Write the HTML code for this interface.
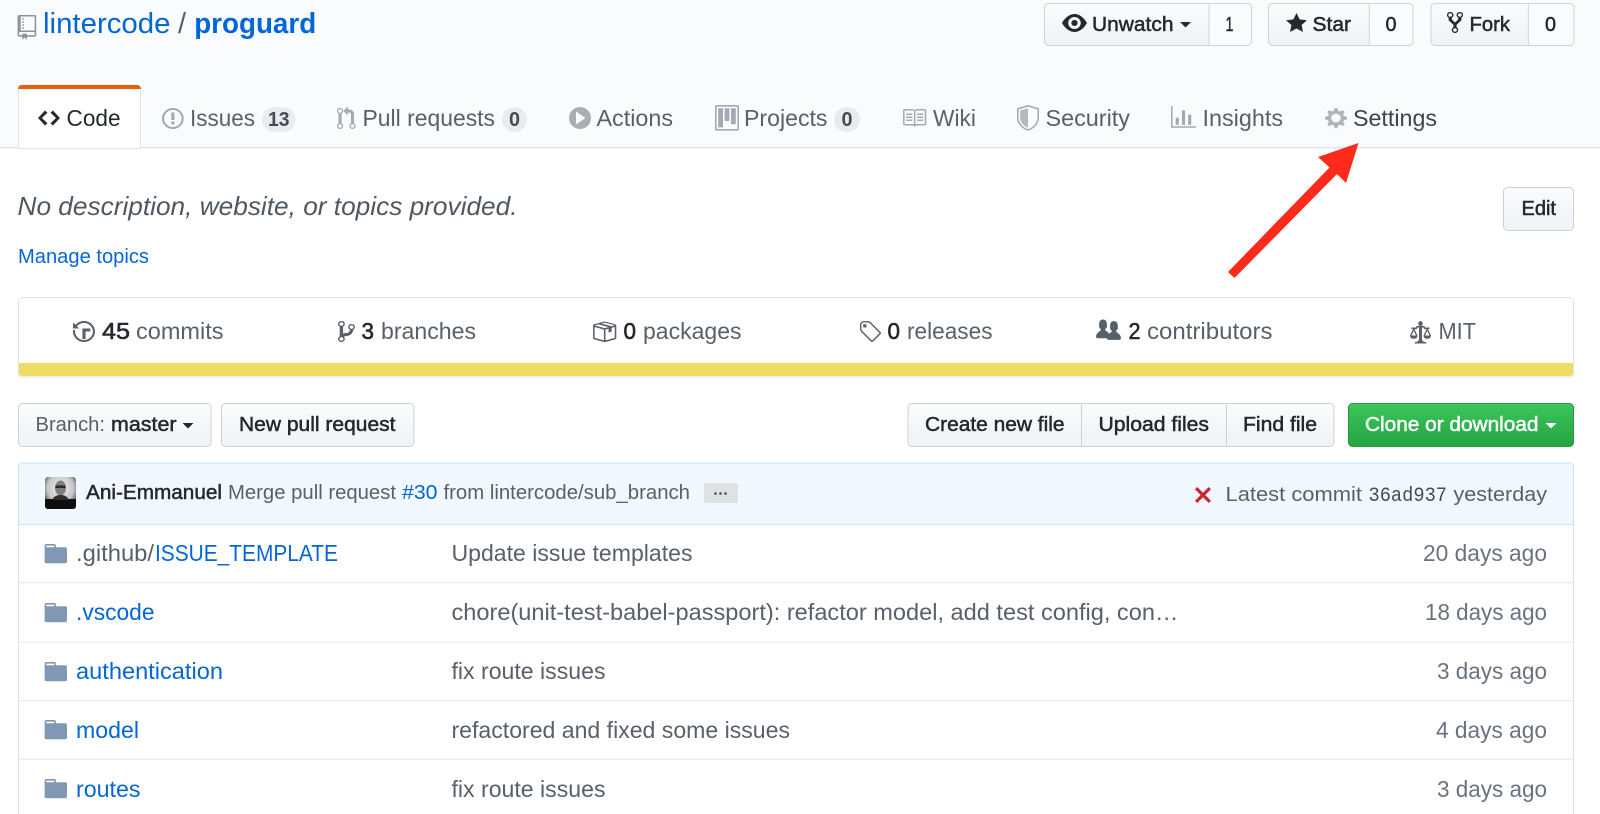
<!DOCTYPE html>
<html lang="en">
<head>
<meta charset="utf-8">
<title>lintercode / proguard</title>
<style>
html,body{margin:0;padding:0;background:#fff;width:1600px;height:814px;overflow:hidden}
svg{display:block;filter:blur(.35px)}
text{font-family:"Liberation Sans",Arial,sans-serif;white-space:pre}
.tab{font-size:23px;fill:#586069}
.cur{font-size:23px;fill:#24292e}
.cnt{font-size:20px;font-weight:700;fill:#444d56}
.btn{font-size:20.5px;fill:#24292e;stroke:#24292e;stroke-width:.5px}
.st{font-size:23px;fill:#586069}
.num{font-size:23px;fill:#24292e;stroke:#24292e;stroke-width:.6px}
.msg{font-size:23px;fill:#586069}
.lnk{font-size:23px;fill:#0366d6}
.tm{font-size:23px;fill:#6a737d}
.cm{font-size:20.5px;fill:#586069}
.ic{fill:#a3aab1}
.ic2{fill:#586069}
</style>
</head>
<body>
<svg width="1600" height="814" viewBox="0 0 1600 814" xmlns="http://www.w3.org/2000/svg">
<defs>
<linearGradient id="g" x1="0" y1="0" x2="0" y2="1"><stop offset="0" stop-color="#fafbfc"/><stop offset="1" stop-color="#eff3f6"/></linearGradient>
<linearGradient id="gg" x1="0" y1="0" x2="0" y2="1"><stop offset="0" stop-color="#3ac75a"/><stop offset="1" stop-color="#27a243"/></linearGradient>
<radialGradient id="av" cx=".5" cy=".35" r=".65"><stop offset="0" stop-color="#f4f4f4"/><stop offset=".65" stop-color="#c6c6c6"/><stop offset="1" stop-color="#444"/></radialGradient>
<path id="fd" fill="#8098b3" fill-rule="evenodd" d="M13 4H7V3c0-.66-.31-1-1-1H1c-.55 0-1 .45-1 1v10c0 .55.45 1 1 1h12c.55 0 1-.45 1-1V5c0-.55-.45-1-1-1zM6 4H1V3h5v1z"/>
</defs>

<!-- header background -->
<rect x="0" y="0" width="1600" height="147" fill="#fafbfc"/>
<rect x="0" y="147" width="1600" height="1.4" fill="#e1e4e8"/>

<!-- repo title -->
<g transform="translate(17.6,15) scale(1.55)"><path fill="#8b949c" fill-rule="evenodd" d="M4 9H3V8h1v1zm0-3H3v1h1V6zm0-2H3v1h1V4zm0-2H3v1h1V2zm8-1v12c0 .55-.45 1-1 1H6v2l-1.5-1.5L3 16v-2H1c-.55 0-1-.45-1-1V1c0-.55.45-1 1-1h10c.55 0 1 .45 1 1zm-1 10H1v2h2v-1h3v1h5v-2zm0-10H2v9h9V1z"/></g>
<text x="43" y="33" font-size="29" fill="#0366d6" textLength="127.500" lengthAdjust="spacingAndGlyphs">lintercode</text>
<text x="178" y="33" font-size="29" fill="#586069">/</text>
<text x="194.200" y="33" font-size="29" font-weight="700" fill="#0366d6" textLength="122" lengthAdjust="spacingAndGlyphs">proguard</text>

<!-- top-right buttons -->
<path d="M1048.500 4h160.500v41h-160.500a4 4 0 0 1-4-4v-33a4 4 0 0 1 4-4z" fill="url(#g)"/>
<rect x="1044.500" y="3.500" width="207" height="42" rx="4" fill="none" stroke="#cfd2d5"/>
<rect x="1208.500" y="4" width="1" height="41" fill="#cfd2d5"/>
<g transform="translate(1062,11) scale(1.56,1.5)"><path fill="#24292e" fill-rule="evenodd" d="M8.06 2C3 2 0 8 0 8s3 6 8.06 6C13 14 16 8 16 8s-3-6-7.94-6zM8 12c-2.200 0-4-1.780-4-4 0-2.200 1.800-4 4-4 2.220 0 4 1.800 4 4 0 2.220-1.780 4-4 4zm2-4c0 1.110-.89 2-2 2-1.110 0-2-.89-2-2 0-1.110.89-2 2-2 1.110 0 2 .89 2 2z"/></g>
<text class="btn" x="1092" y="31" textLength="81.500" lengthAdjust="spacingAndGlyphs">Unwatch</text>
<path d="M1180 22h11l-5.500 5.500z" fill="#24292e"/>
<text class="btn" x="1225.500" y="31" textLength="8" lengthAdjust="spacingAndGlyphs">1</text>

<path d="M1272.500 4h96.500v41h-96.500a4 4 0 0 1-4-4v-33a4 4 0 0 1 4-4z" fill="url(#g)"/>
<rect x="1268.500" y="3.500" width="144.500" height="42" rx="4" fill="none" stroke="#cfd2d5"/>
<rect x="1368.800" y="4" width="1" height="41" fill="#cfd2d5"/>
<g transform="translate(1286,11.500) scale(1.5,1.46)"><path fill="#24292e" d="M14 6l-4.900-.64L7 1 4.900 5.360 0 6l3.600 3.260L2.670 14 7 11.670 11.330 14l-.93-4.740L14 6z"/></g>
<text class="btn" x="1312.500" y="31" textLength="38.500" lengthAdjust="spacingAndGlyphs">Star</text>
<text class="btn" x="1385.500" y="31" textLength="11" lengthAdjust="spacingAndGlyphs">0</text>

<path d="M1435 4h93v41h-93a4 4 0 0 1-4-4v-33a4 4 0 0 1 4-4z" fill="url(#g)"/>
<rect x="1431" y="3.500" width="143" height="42" rx="4" fill="none" stroke="#cfd2d5"/>
<rect x="1527.800" y="4" width="1" height="41" fill="#cfd2d5"/>
<g transform="translate(1447,10.500) scale(1.6,1.5)"><path fill="#24292e" fill-rule="evenodd" d="M8 1a1.993 1.993 0 0 0-1 3.720V6L5 8 3 6V4.720A1.993 1.993 0 0 0 2 1a1.993 1.993 0 0 0-1 3.720V6.500l3 3v1.780A1.993 1.993 0 0 0 5 15a1.993 1.993 0 0 0 1-3.720V9.500l3-3V4.720A1.993 1.993 0 0 0 8 1zM2 4.200C1.340 4.200.8 3.650.8 3c0-.65.55-1.200 1.200-1.200.65 0 1.200.55 1.200 1.200 0 .65-.55 1.200-1.200 1.200zm3 10c-.66 0-1.200-.55-1.200-1.200 0-.65.55-1.200 1.200-1.200.65 0 1.200.55 1.200 1.200 0 .65-.55 1.200-1.200 1.200zm3-10c-.66 0-1.200-.55-1.200-1.200 0-.65.55-1.200 1.200-1.200.65 0 1.200.55 1.200 1.200 0 .65-.55 1.200-1.200 1.200z"/></g>
<text class="btn" x="1469.500" y="31" textLength="40.500" lengthAdjust="spacingAndGlyphs">Fork</text>
<text class="btn" x="1545" y="31" textLength="11" lengthAdjust="spacingAndGlyphs">0</text>

<!-- tabs -->
<path d="M18.500 148.500V89a4 4 0 0 1 4-4h114a4 4 0 0 1 4 4v59.500z" fill="#fff" stroke="#e1e4e8"/>
<path d="M18 89a4 4 0 0 1 4-4h115a4 4 0 0 1 4 4z" fill="#e36209"/>
<g transform="translate(38,106) scale(1.57,1.5)"><path fill="#24292e" d="M9.500 3L8 4.500 11.500 8 8 11.500 9.500 13 14 8 9.500 3zm-5 0L0 8l4.500 5L6 11.500 2.500 8 6 4.500 4.500 3z"/></g>
<text class="cur" x="66.500" y="126" textLength="54" lengthAdjust="spacingAndGlyphs">Code</text>

<g transform="translate(162,106.500) scale(1.55,1.5)"><path class="ic" fill-rule="evenodd" d="M7 2.300c3.140 0 5.700 2.560 5.700 5.700s-2.560 5.700-5.700 5.700A5.710 5.710 0 0 1 1.300 8c0-3.140 2.560-5.700 5.700-5.700zM7 1C3.140 1 0 4.140 0 8s3.140 7 7 7 7-3.140 7-7-3.140-7-7-7zm1 3H6v5h2V4zm0 6H6v2h2v-2z"/></g>
<text class="tab" x="190" y="126" textLength="65" lengthAdjust="spacingAndGlyphs">Issues</text>
<rect x="262" y="107" width="33.500" height="25" rx="12.500" fill="#e9ebee"/>
<text class="cnt" x="268" y="126" textLength="21.500" lengthAdjust="spacingAndGlyphs">13</text>

<g transform="translate(337,106.500) scale(1.55,1.5)"><path class="ic" fill-rule="evenodd" d="M11 11.280V5c-.03-.78-.34-1.470-.94-2.060C9.460 2.350 8.780 2.030 8 2H7V0L4 3l3 3V4h1c.27.02.48.11.69.31.21.2.3.42.31.69v6.280A1.993 1.993 0 0 0 10 15a1.993 1.993 0 0 0 1-3.720zm-1 2.920c-.66 0-1.200-.55-1.200-1.200 0-.65.55-1.200 1.200-1.200.65 0 1.200.55 1.200 1.200 0 .65-.55 1.200-1.200 1.200zM4 3c0-1.110-.89-2-2-2a1.993 1.993 0 0 0-1 3.720v6.560A1.993 1.993 0 0 0 2 15a1.993 1.993 0 0 0 1-3.720V4.720c.59-.34 1-.98 1-1.720zm-.8 10c0 .66-.55 1.200-1.200 1.200-.65 0-1.200-.55-1.200-1.200 0-.65.55-1.200 1.200-1.200.65 0 1.200.55 1.200 1.200zM2 4.200C1.340 4.200.8 3.650.8 3c0-.65.55-1.200 1.200-1.200.65 0 1.200.55 1.200 1.200 0 .65-.55 1.200-1.200 1.200z"/></g>
<text class="tab" x="362.500" y="126" textLength="132.500" lengthAdjust="spacingAndGlyphs">Pull requests</text>
<rect x="502" y="107" width="25" height="25" rx="12.500" fill="#e9ebee"/>
<text class="cnt" x="509" y="126" textLength="11" lengthAdjust="spacingAndGlyphs">0</text>

<circle cx="580" cy="118" r="11" fill="#a9aeb3"/>
<path d="M576 111.500l9.500 6.500-9.500 6.500z" fill="#fafbfc"/>
<text class="tab" x="596.500" y="126" textLength="76.500" lengthAdjust="spacingAndGlyphs">Actions</text>

<g transform="translate(715,105) scale(1.6)"><path class="ic" fill-rule="evenodd" d="M10 12h3V2h-3v10zm-4-2h3V2H6v8zm-4 4h3V2H2v12zm-1 1h13V1H1v14zM14 0H1a1 1 0 0 0-1 1v14a1 1 0 0 0 1 1h13a1 1 0 0 0 1-1V1a1 1 0 0 0-1-1z"/></g>
<text class="tab" x="744" y="126" textLength="83.500" lengthAdjust="spacingAndGlyphs">Projects</text>
<rect x="834" y="107" width="26" height="25" rx="12.500" fill="#e9ebee"/>
<text class="cnt" x="841.500" y="126" textLength="11" lengthAdjust="spacingAndGlyphs">0</text>

<g transform="translate(901.500,106) scale(1.55,1.5)"><path class="ic" fill-rule="evenodd" d="M3 5h4v1H3V5zm0 3h4V7H3v1zm0 2h4V9H3v1zm11-5h-4v1h4V5zm0 2h-4v1h4V7zm0 2h-4v1h4V9zm2-6v9c0 .55-.45 1-1 1H9.500l-1 1-1-1H2c-.55 0-1-.45-1-1V3c0-.55.45-1 1-1h5.500l1 1 1-1H15c.55 0 1 .45 1 1zm-8 .5L7.500 3H2v9h6V3.500zm7-.5H9.500l-.5.5V12h6V3z"/></g>
<text class="tab" x="933" y="126" textLength="43" lengthAdjust="spacingAndGlyphs">Wiki</text>

<g transform="translate(1017,105) scale(1.57,1.6)"><path class="ic" fill-rule="evenodd" d="M7 0L0 2v6.020C0 12.690 5.310 16 7 16c1.690 0 7-3.310 7-7.980V2L7 0zM7 1L1 2.800V8c0 4 4.500 7 6 7s6-3 6-7V2.800z"/><path fill="#b4b9be" d="M7 2L2 3.400V8c0 3.500 3.500 6 5 6z"/></g>
<text class="tab" x="1045.500" y="126" textLength="84.500" lengthAdjust="spacingAndGlyphs">Security</text>

<g transform="translate(1171,106) scale(1.56,1.45)"><path class="ic" d="M16 14v1H0V0h1v14h15zM5 13H3V8h2v5zm4 0H7V3h2v10zm4 0h-2V6h2v7z"/></g>
<text class="tab" x="1202.500" y="126" textLength="80.500" lengthAdjust="spacingAndGlyphs">Insights</text>

<g transform="translate(1325,106.500) scale(1.57,1.45)"><path fill="#b0b5ba" fill-rule="evenodd" d="M14 8.770v-1.600l-1.940-.64-.45-1.090.88-1.840-1.130-1.130-1.810.91-1.090-.45-.69-1.920h-1.600l-.63 1.940-1.110.45-1.840-.88-1.130 1.130.91 1.810-.45 1.090L0 7.230v1.590l1.940.64.45 1.090-.88 1.840 1.130 1.130 1.810-.91 1.090.45.69 1.920h1.590l.63-1.940 1.110-.45 1.840.88 1.130-1.130-.92-1.810.47-1.090L14 8.750v.02zM7 11c-1.660 0-3-1.340-3-3s1.340-3 3-3 3 1.340 3 3-1.340 3-3 3z"/></g>
<text class="cur" x="1353" y="126" textLength="84" lengthAdjust="spacingAndGlyphs" style="fill:#3c444c">Settings</text>

<!-- description -->
<text x="17.500" y="215" font-size="26" font-style="italic" fill="#4f5860" textLength="500" lengthAdjust="spacingAndGlyphs">No description, website, or topics provided.</text>
<text class="lnk" x="18" y="263" style="font-size:20.5px" textLength="131" lengthAdjust="spacingAndGlyphs">Manage topics</text>

<rect x="1503.500" y="187.500" width="70" height="43" rx="4" fill="url(#g)" stroke="#cfd2d5"/>
<text class="btn" x="1521.500" y="215" textLength="34.500" lengthAdjust="spacingAndGlyphs">Edit</text>

<!-- stats box -->
<rect x="18.500" y="297.500" width="1555" height="79.500" rx="4" fill="#fff" stroke="#dfe2e5"/>
<path d="M19 363h1554v10a3 3 0 0 1-3 3H22a3 3 0 0 1-3-3z" fill="#f1dc62"/>

<g transform="translate(73,319.500) scale(1.57,1.5)"><path class="ic2" fill-rule="evenodd" d="M8 13H6V6h5v2H8v5zM7 1C4.810 1 2.870 2.020 1.590 3.590L0 2v4h4L2.500 4.500C3.550 3.170 5.170 2.300 7 2.300c3.140 0 5.700 2.560 5.700 5.700s-2.560 5.700-5.700 5.700A5.710 5.710 0 0 1 1.300 8c0-.34.03-.67.09-1H.08C.03 7.330 0 7.660 0 8c0 3.860 3.140 7 7 7s7-3.140 7-7-3.140-7-7-7z"/></g>
<text class="num" x="102" y="339" textLength="28" lengthAdjust="spacingAndGlyphs">45</text>
<text class="st" x="136" y="339" textLength="87.500" lengthAdjust="spacingAndGlyphs">commits</text>

<g transform="translate(338,319.500) scale(1.7,1.5)"><path class="ic2" fill-rule="evenodd" d="M10 5c0-1.110-.89-2-2-2a1.993 1.993 0 0 0-1 3.720v.3c-.02.52-.23.98-.63 1.380-.4.4-.86.61-1.380.63-.83.02-1.480.16-2 .45V4.720a1.993 1.993 0 0 0-1-3.720C.88 1 0 1.890 0 3a2 2 0 0 0 1 1.720v6.560c-.59.35-1 .99-1 1.720 0 1.110.89 2 2 2 1.110 0 2-.89 2-2 0-.53-.2-1-.53-1.360.09-.06.48-.41.59-.47.25-.11.56-.17.94-.17 1.050-.05 1.950-.45 2.750-1.250S8.950 7.770 9 6.730h-.02C9.590 6.370 10 5.730 10 5zM2 1.800c.66 0 1.200.55 1.200 1.200 0 .65-.55 1.200-1.200 1.200C1.350 4.200.8 3.650.8 3c0-.65.55-1.200 1.200-1.200zm0 12.410c-.66 0-1.200-.55-1.200-1.200 0-.65.55-1.200 1.200-1.200.65 0 1.200.55 1.200 1.200 0 .65-.55 1.200-1.200 1.200zm6-8c-.66 0-1.200-.55-1.200-1.200 0-.65.55-1.200 1.200-1.200.65 0 1.200.55 1.200 1.200 0 .65-.55 1.200-1.200 1.200z"/></g>
<text class="num" x="361.500" y="339" textLength="12.500" lengthAdjust="spacingAndGlyphs">3</text>
<text class="st" x="381" y="339" textLength="95" lengthAdjust="spacingAndGlyphs">branches</text>

<g transform="translate(591.500,319) scale(1.55,1.6)"><path class="ic2" fill-rule="evenodd" d="M1 4.270v7.470c0 .45.3.84.75.97l6.500 1.730c.16.05.34.05.5 0l6.500-1.730c.45-.13.75-.52.75-.97V4.270c0-.45-.3-.84-.75-.97l-6.500-1.740a1.400 1.400 0 0 0-.5 0L1.750 3.300c-.45.13-.75.52-.75.97zm7 9.090l-6-1.590V5l6 1.610v6.750zM2 4l2.500-.67L11 5.060l-2.500.67L2 4zm13 7.770l-6 1.590V6.610l2-.55V8.500l2-.53V5.530L15 5v6.770zm-2-7.240L6.500 2.800l2-.53L15 4l-2 .53z"/></g>
<text class="num" x="623.500" y="339" textLength="12.500" lengthAdjust="spacingAndGlyphs">0</text>
<text class="st" x="643" y="339" textLength="98.500" lengthAdjust="spacingAndGlyphs">packages</text>

<g transform="translate(858.400,319.500) scale(1.6)"><path class="ic2" fill-rule="evenodd" d="M7.730 1.730C7.260 1.260 6.620 1 5.960 1H3.500C2.130 1 1 2.130 1 3.500v2.470c0 .66.27 1.300.73 1.770l6.060 6.060c.39.39 1.020.39 1.410 0l4.590-4.590a.996.996 0 0 0 0-1.410L7.730 1.730zM2.380 7.090c-.31-.3-.47-.7-.47-1.130V3.500c0-.88.72-1.590 1.590-1.590h2.470c.42 0 .83.16 1.130.47l6.140 6.130-4.730 4.730-6.130-6.150zM3.010 3h2v2H3V3h.01z"/></g>
<text class="num" x="887.500" y="339" textLength="12.500" lengthAdjust="spacingAndGlyphs">0</text>
<text class="st" x="907" y="339" textLength="85.500" lengthAdjust="spacingAndGlyphs">releases</text>

<g transform="translate(1096,318) scale(1.56)"><path class="ic2" d="M16 12.999c0 .439-.45 1-1 1H7.995c-.539 0-.994-.447-.995-.999H1c-.54 0-1-.561-1-1 0-2.634 3-4 3-4s.229-.409 0-1c-.841-.621-1.058-.59-1-3 .058-2.419 1.367-3 2.500-3s2.442.58 2.500 3c.058 2.410-.159 2.379-1 3-.229.59 0 1 0 1s1.549.711 2.420 2.088C9.196 9.369 10 8.999 10 8.999s.229-.409 0-1c-.841-.62-1.058-.59-1-3 .058-2.419 1.367-3 2.500-3s2.437.581 2.495 3c.059 2.410-.158 2.380-1 3-.229.59 0 1 0 1s3.005 1.366 3.005 4z"/></g>
<text class="num" x="1128.500" y="339" textLength="12" lengthAdjust="spacingAndGlyphs">2</text>
<text class="st" x="1147" y="339" textLength="125.500" lengthAdjust="spacingAndGlyphs">contributors</text>

<g transform="translate(1410,319.500) scale(1.5,1.6)"><path class="ic2" fill-rule="evenodd" d="M7 4c-.83 0-1.500-.67-1.500-1.500S6.170 1 7 1s1.500.67 1.500 1.500S7.830 4 7 4zm7 6c0 1.110-.89 2-2 2h-1c-1.110 0-2-.89-2-2l2-4h-1c-.55 0-1-.45-1-1H8v8c.42 0 1 .45 1 1h1c.42 0 1 .45 1 1H3c0-.55.58-1 1-1h1c0-.55.58-1 1-1h.03L6 5H5c0 .55-.45 1-1 1H3l2 4c0 1.110-.89 2-2 2H2c-1.110 0-2-.89-2-2l2-4H1V5h3c0-.55.45-1 1-1h4c.55 0 1 .45 1 1h3v1h-1l2 4zM2.500 7L1 10h3L2.500 7zM13 10l-1.500-3-1.500 3h3z"/></g>
<text class="st" x="1438.500" y="339" textLength="37.500" lengthAdjust="spacingAndGlyphs">MIT</text>

<!-- action buttons -->
<rect x="18.500" y="403.500" width="192.500" height="43" rx="4" fill="url(#g)" stroke="#cfd2d5"/>
<text x="35.500" y="431" font-size="20.500" fill="#586069" textLength="69.500" lengthAdjust="spacingAndGlyphs">Branch:</text>
<text class="btn" x="111" y="431" textLength="65.500" lengthAdjust="spacingAndGlyphs">master</text>
<path d="M182.500 423h11l-5.500 5.500z" fill="#24292e"/>

<rect x="221.500" y="403.500" width="192.500" height="43" rx="4" fill="url(#g)" stroke="#cfd2d5"/>
<text class="btn" x="239" y="431" textLength="156.500" lengthAdjust="spacingAndGlyphs">New pull request</text>

<rect x="908" y="403.500" width="426" height="43" rx="4" fill="url(#g)" stroke="#cfd2d5"/>
<rect x="1081" y="404" width="1" height="42" fill="#cfd2d5"/>
<rect x="1226" y="404" width="1" height="42" fill="#cfd2d5"/>
<text class="btn" x="925" y="431" textLength="139.500" lengthAdjust="spacingAndGlyphs">Create new file</text>
<text class="btn" x="1098.500" y="431" textLength="110.500" lengthAdjust="spacingAndGlyphs">Upload files</text>
<text class="btn" x="1243" y="431" textLength="74" lengthAdjust="spacingAndGlyphs">Find file</text>

<rect x="1348.500" y="403.500" width="225" height="43" rx="4" fill="url(#gg)" stroke="#259a3f"/>
<text class="btn" x="1365" y="431" textLength="173.500" lengthAdjust="spacingAndGlyphs" style="fill:#fff;stroke:#fff">Clone or download</text>
<path d="M1545.500 423h11l-5.500 5.500z" fill="#fff"/>

<!-- file table -->
<path d="M18.500 814V467a4 4 0 0 1 4-4h1547a4 4 0 0 1 4 4v347" fill="#fff" stroke="#dfe2e5"/>
<path d="M18.500 524.500V467a4 4 0 0 1 4-4h1547a4 4 0 0 1 4 4v57.500z" fill="#f1f8ff" stroke="#c8e1ff"/>

<rect x="45" y="477" width="31" height="32" rx="3" fill="url(#av)"/>
<path d="M45 499h31v7a3 3 0 0 1-3 3H48a3 3 0 0 1-3-3z" fill="#0e0e0e"/>
<ellipse cx="60.500" cy="488" rx="5.500" ry="7.500" fill="#7d7d7d"/>
<rect x="55.500" y="485.500" width="10" height="2.500" fill="#2a2a2a"/>
<path d="M52 500c2-4 5-5 8.500-5s6.500 1 8.500 5z" fill="#2e2e2e"/>

<text x="86" y="499" font-size="20.500" fill="#24292e" stroke="#24292e" stroke-width=".5" textLength="136" lengthAdjust="spacingAndGlyphs">Ani-Emmanuel</text>
<text class="cm" x="228" y="499" textLength="168" lengthAdjust="spacingAndGlyphs">Merge pull request</text>
<text class="cm" x="402" y="499" textLength="35.500" lengthAdjust="spacingAndGlyphs" style="fill:#0366d6">#30</text>
<text class="cm" x="443.500" y="499" textLength="246.500" lengthAdjust="spacingAndGlyphs">from lintercode/sub_branch</text>
<rect x="704" y="483" width="34" height="20" rx="2" fill="#dfe2e5"/>
<circle cx="715.500" cy="493.500" r="1.300" fill="#444d56"/><circle cx="720.500" cy="493.500" r="1.300" fill="#444d56"/><circle cx="725.500" cy="493.500" r="1.300" fill="#444d56"/>

<g transform="translate(1193.800,482.800) scale(1.53)"><path fill="#cb2431" d="M7.480 8l3.750 3.750-1.480 1.480L6 9.480l-3.750 3.750-1.480-1.480L4.520 8 .77 4.250l1.480-1.480L6 6.520l3.750-3.750 1.480 1.480L7.480 8z"/></g>
<text class="cm" x="1225.500" y="501" textLength="136.500" lengthAdjust="spacingAndGlyphs">Latest commit</text>
<text x="1368.500" y="501" style="font-family:'Liberation Mono',monospace" font-size="20" fill="#444d56" textLength="78.500" lengthAdjust="spacingAndGlyphs">36ad937</text>
<text class="cm" x="1453.500" y="501" textLength="93.500" lengthAdjust="spacingAndGlyphs">yesterday</text>

<rect x="19" y="582" width="1554" height="1.300" fill="#eaecef"/>
<rect x="19" y="641.500" width="1554" height="1.300" fill="#eaecef"/>
<rect x="19" y="700" width="1554" height="1.300" fill="#eaecef"/>
<rect x="19" y="758.500" width="1554" height="1.300" fill="#eaecef"/>

<use href="#fd" transform="translate(44.600,540.800) scale(1.6)"/>
<text class="msg" x="76" y="561" textLength="78" lengthAdjust="spacingAndGlyphs">.github/</text>
<text class="lnk" x="155" y="561" textLength="183" lengthAdjust="spacingAndGlyphs">ISSUE_TEMPLATE</text>
<text class="msg" x="451.500" y="561" textLength="241" lengthAdjust="spacingAndGlyphs">Update issue templates</text>
<text class="tm" x="1423" y="561" textLength="124" lengthAdjust="spacingAndGlyphs">20 days ago</text>

<use href="#fd" transform="translate(44.600,599.800) scale(1.6)"/>
<text class="lnk" x="76" y="620" textLength="78.500" lengthAdjust="spacingAndGlyphs">.vscode</text>
<text class="msg" x="451.500" y="620" textLength="727" lengthAdjust="spacingAndGlyphs">chore(unit-test-babel-passport): refactor model, add test config, con…</text>
<text class="tm" x="1425" y="620" textLength="122" lengthAdjust="spacingAndGlyphs">18 days ago</text>

<use href="#fd" transform="translate(44.600,658.800) scale(1.6)"/>
<text class="lnk" x="76" y="679" textLength="147" lengthAdjust="spacingAndGlyphs">authentication</text>
<text class="msg" x="451.500" y="679" textLength="154" lengthAdjust="spacingAndGlyphs">fix route issues</text>
<text class="tm" x="1437" y="679" textLength="110" lengthAdjust="spacingAndGlyphs">3 days ago</text>

<use href="#fd" transform="translate(44.600,716.800) scale(1.6)"/>
<text class="lnk" x="76" y="738" textLength="63" lengthAdjust="spacingAndGlyphs">model</text>
<text class="msg" x="451.500" y="738" textLength="338.500" lengthAdjust="spacingAndGlyphs">refactored and fixed some issues</text>
<text class="tm" x="1436" y="738" textLength="111" lengthAdjust="spacingAndGlyphs">4 days ago</text>

<use href="#fd" transform="translate(44.600,775.800) scale(1.6)"/>
<text class="lnk" x="76" y="797" textLength="64.500" lengthAdjust="spacingAndGlyphs">routes</text>
<text class="msg" x="451.500" y="797" textLength="154" lengthAdjust="spacingAndGlyphs">fix route issues</text>
<text class="tm" x="1437" y="797" textLength="110" lengthAdjust="spacingAndGlyphs">3 days ago</text>

<!-- red arrow -->
<polygon points="1358.500,143 1318,157 1329.500,167.500 1228,272 1234.500,278 1337,174 1346,183" fill="#fe2a1b"/>
</svg>
</body>
</html>
